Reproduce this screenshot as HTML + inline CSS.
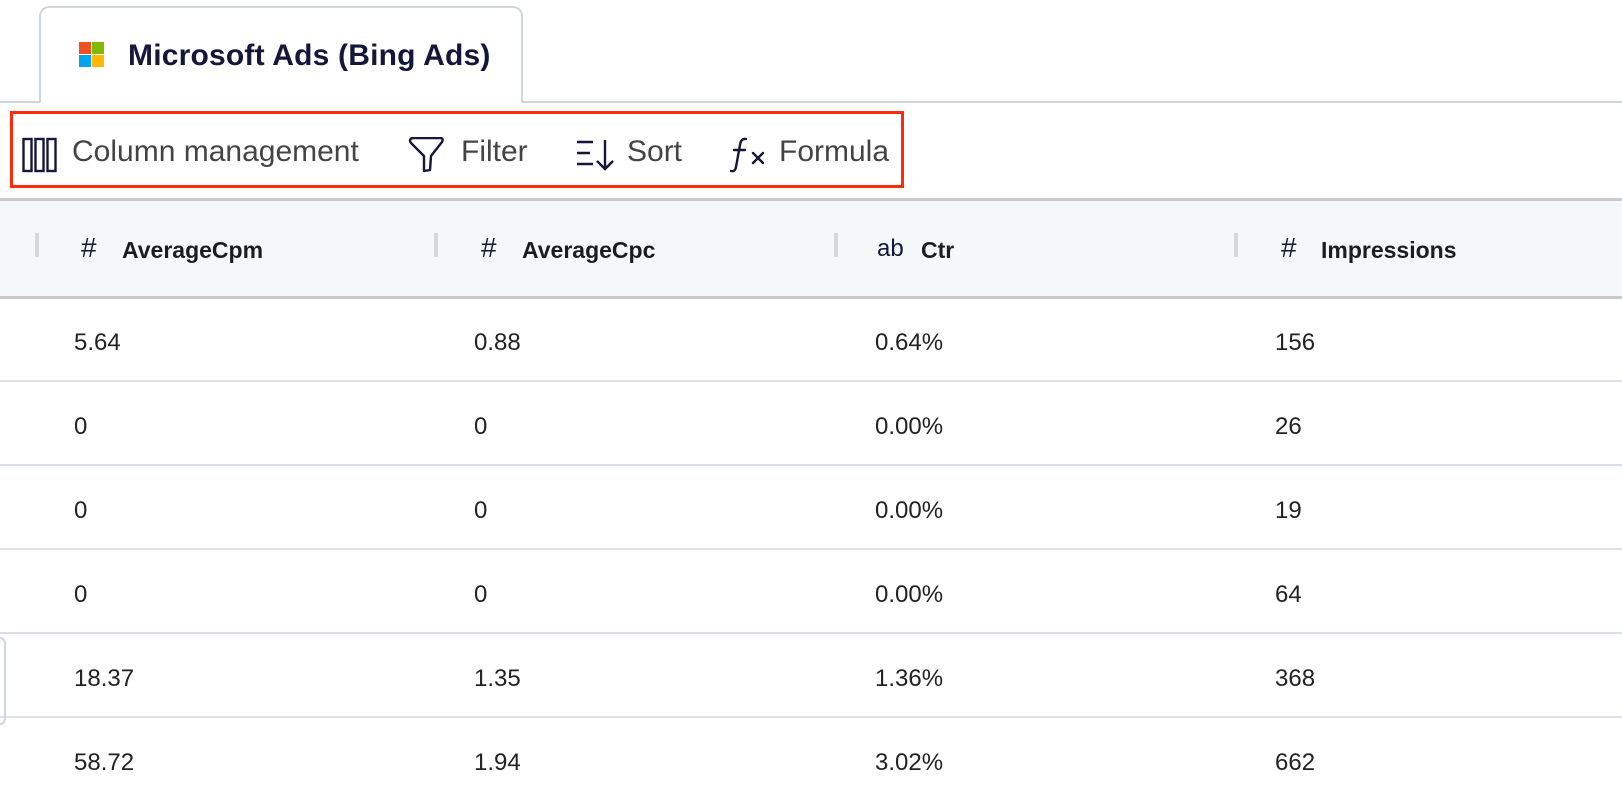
<!DOCTYPE html>
<html><head><meta charset="utf-8"><style>
*{margin:0;padding:0;box-sizing:border-box}
body{width:1622px;height:790px;background:#fff;font-family:"Liberation Sans",sans-serif;position:relative;overflow:hidden}
.abs{position:absolute}
.tab{left:39px;top:6px;width:484px;height:97px;border:2px solid #cfd6db;border-bottom:none;border-radius:10px 10px 0 0;background:#fff}
.tabline{top:101px;height:2px;background:#cfd6db}
.title{left:128px;top:39px;font-size:30px;line-height:34px;color:#14163a;font-weight:bold;letter-spacing:0.2px}
.red{left:10px;top:111px;width:894px;height:77px;border:3px solid #ff2a0a}
.tb{top:135px;font-size:30px;line-height:34px;color:#444;white-space:nowrap}
.hdr{left:0;top:198px;width:1622px;height:101px;background:#f5f8f9;border-top:3px solid #c8cbcd;border-bottom:3px solid #c8cbcd}
.sep{top:233px;width:4px;height:24px;background:#d5d8da}
.hi{top:232px;font-size:28px;color:#14163a}
.hl{top:237px;font-size:23px;line-height:26px;font-weight:bold;color:#1b1d21}
.rl{left:0;width:1622px;height:2px;background:#dde0ea}
.c{font-size:24px;color:#222;line-height:26px}
</style></head><body>
<div class="abs tabline" style="left:0;width:40px"></div>
<div class="abs tabline" style="left:522px;width:1100px"></div>
<div class="abs tab"></div>
<svg class="abs" style="left:79px;top:42px" width="25" height="25" viewBox="0 0 25 25">
<rect x="0" y="0" width="12" height="12" fill="#f25022"/><rect x="13" y="0" width="12" height="12" fill="#7fba00"/>
<rect x="0" y="13" width="12" height="12" fill="#00a4ef"/><rect x="13" y="13" width="12" height="12" fill="#ffb900"/></svg>
<div class="abs title">Microsoft Ads (Bing Ads)</div>

<div class="abs red"></div>
<svg class="abs" style="left:22px;top:137px" width="36" height="36" viewBox="0 0 36 36" fill="none" stroke="#14163a" stroke-width="2.4">
<rect x="1.5" y="2" width="8" height="32"/><rect x="13.5" y="2" width="8" height="32"/><rect x="25.5" y="2" width="8" height="32"/></svg>
<div class="abs tb" style="left:72px">Column management</div>
<svg class="abs" style="left:408px;top:137px" width="38" height="36" viewBox="0 0 38 36" fill="none" stroke="#14163a" stroke-width="2.4" stroke-linejoin="round">
<path d="M2 4 Q2 1 6 1 L32 1 Q36 1 34 5 L23 19 L22 33 L16 34 L16 19 L4 7 Q2 5 2 4Z"/></svg>
<div class="abs tb" style="left:461px">Filter</div>
<svg class="abs" style="left:576px;top:138px" width="40" height="34" viewBox="0 0 40 34" fill="none" stroke="#14163a" stroke-width="2.4">
<path d="M1 4H17M1 15H14M1 26H17"/><path d="M29 2V31M21 23L29 31L37 23"/></svg>
<div class="abs tb" style="left:627px">Sort</div>
<svg class="abs" style="left:730px;top:135px" width="40" height="40" viewBox="0 0 40 40" fill="none" stroke="#14163a" stroke-width="2.4" stroke-linecap="round">
<path d="M16 4 Q11 3 10 10 L6 32 Q5 37 1 36"/><path d="M4 15H15"/><path d="M23 18L33 28M33 18L23 28"/></svg>
<div class="abs tb" style="left:779px">Formula</div>

<div class="abs hdr"></div>
<div class="abs sep" style="left:35px"></div>
<div class="abs sep" style="left:434px"></div>
<div class="abs sep" style="left:834px"></div>
<div class="abs sep" style="left:1234px"></div>
<div class="abs hi" style="left:81px">#</div><div class="abs hl" style="left:122px">AverageCpm</div>
<div class="abs hi" style="left:481px">#</div><div class="abs hl" style="left:522px">AverageCpc</div>
<div class="abs hi" style="left:877px;font-size:24px;top:235px">ab</div><div class="abs hl" style="left:921px">Ctr</div>
<div class="abs hi" style="left:1281px">#</div><div class="abs hl" style="left:1321px">Impressions</div>

<div class="abs rl" style="top:380px"></div>
<div class="abs rl" style="top:464px"></div>
<div class="abs rl" style="top:548px"></div>
<div class="abs rl" style="top:632px"></div>
<div class="abs rl" style="top:716px"></div>
<div class="abs" style="left:-10px;top:637px;width:16px;height:88px;border:2px solid #cfd6db;border-radius:6px"></div>

<div class="abs c" style="left:74px;top:330px">5.64</div><div class="abs c" style="left:474px;top:330px">0.88</div><div class="abs c" style="left:875px;top:330px">0.64%</div><div class="abs c" style="left:1275px;top:330px">156</div>
<div class="abs c" style="left:74px;top:414px">0</div><div class="abs c" style="left:474px;top:414px">0</div><div class="abs c" style="left:875px;top:414px">0.00%</div><div class="abs c" style="left:1275px;top:414px">26</div>
<div class="abs c" style="left:74px;top:498px">0</div><div class="abs c" style="left:474px;top:498px">0</div><div class="abs c" style="left:875px;top:498px">0.00%</div><div class="abs c" style="left:1275px;top:498px">19</div>
<div class="abs c" style="left:74px;top:582px">0</div><div class="abs c" style="left:474px;top:582px">0</div><div class="abs c" style="left:875px;top:582px">0.00%</div><div class="abs c" style="left:1275px;top:582px">64</div>
<div class="abs c" style="left:74px;top:666px">18.37</div><div class="abs c" style="left:474px;top:666px">1.35</div><div class="abs c" style="left:875px;top:666px">1.36%</div><div class="abs c" style="left:1275px;top:666px">368</div>
<div class="abs c" style="left:74px;top:750px">58.72</div><div class="abs c" style="left:474px;top:750px">1.94</div><div class="abs c" style="left:875px;top:750px">3.02%</div><div class="abs c" style="left:1275px;top:750px">662</div>
</body></html>
